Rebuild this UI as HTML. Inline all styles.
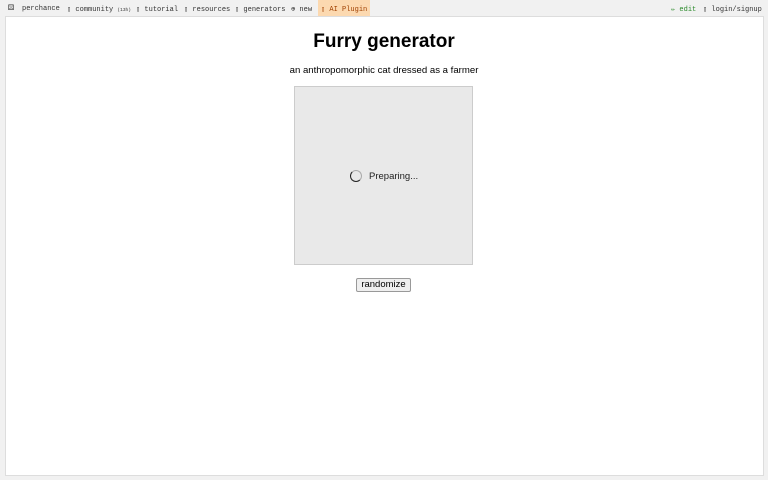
<!DOCTYPE html>
<html><head><meta charset="utf-8"><style>
html,body{margin:0;padding:0;width:768px;height:480px;background:#f1f1f1;overflow:hidden;font-family:"Liberation Sans",sans-serif}
.bar{position:absolute;top:0;left:0;right:0;height:16px;font-family:"Liberation Mono",monospace;font-size:7px;color:#333}
.bar span{position:absolute;top:5px;white-space:nowrap}
.ai{position:absolute;left:318px;top:0;width:52px;height:16px;background:#fcd9b0}
.main{position:absolute;left:5px;top:16px;width:757px;height:458px;background:#fff;border:1px solid #ddd}
h1{position:absolute;left:0;right:0;top:31px;margin:0;text-align:center;font-size:19px;font-weight:bold;color:#000}
.sub{position:absolute;left:0;right:0;top:65px;text-align:center;font-size:9.6px;color:#000}
.box{position:absolute;left:294px;top:86px;width:179px;height:179px;background:#e9e9e9;border:1px solid #ccc;box-sizing:border-box}
.prep{position:absolute;left:369px;top:171px;font-size:9.5px;color:#222}
.spin{position:absolute;left:350px;top:170px;width:10px;height:10px;border:1.3px solid #aaa;border-bottom-color:#222;border-left-color:#222;border-radius:50%}
.btn{position:absolute;left:356px;top:278px;width:55px;height:14px;border:1px solid #999;background:#efefef;border-radius:2px;box-sizing:border-box;font-size:9.5px;text-align:center;line-height:12px;color:#000}
</style></head><body>
<div class="ai"></div>
<div class="bar">
<span style="left:8px;top:2px;font-size:10px">⚄</span>
<span style="left:22px">perchance</span>
<span style="left:67px">▯ community <small style="font-size:4.5px">(13h)</small></span>
<span style="left:136px">▯ tutorial</span>
<span style="left:184px">▯ resources</span>
<span style="left:235px">▯ generators</span>
<span style="left:291px">⊕ new</span>
<span style="left:321px;color:#a04000">▯ AI Plugin</span>
<span style="left:671px;color:#2a8a2a">✏ edit</span>
<span style="left:703px">▯ login/signup</span>
</div>
<div class="main"></div>
<h1>Furry generator</h1>
<div class="sub">an anthropomorphic cat dressed as a farmer</div>
<div class="box"></div>
<div class="spin"></div>
<div class="prep">Preparing...</div>
<div class="btn">randomize</div>
</body></html>
